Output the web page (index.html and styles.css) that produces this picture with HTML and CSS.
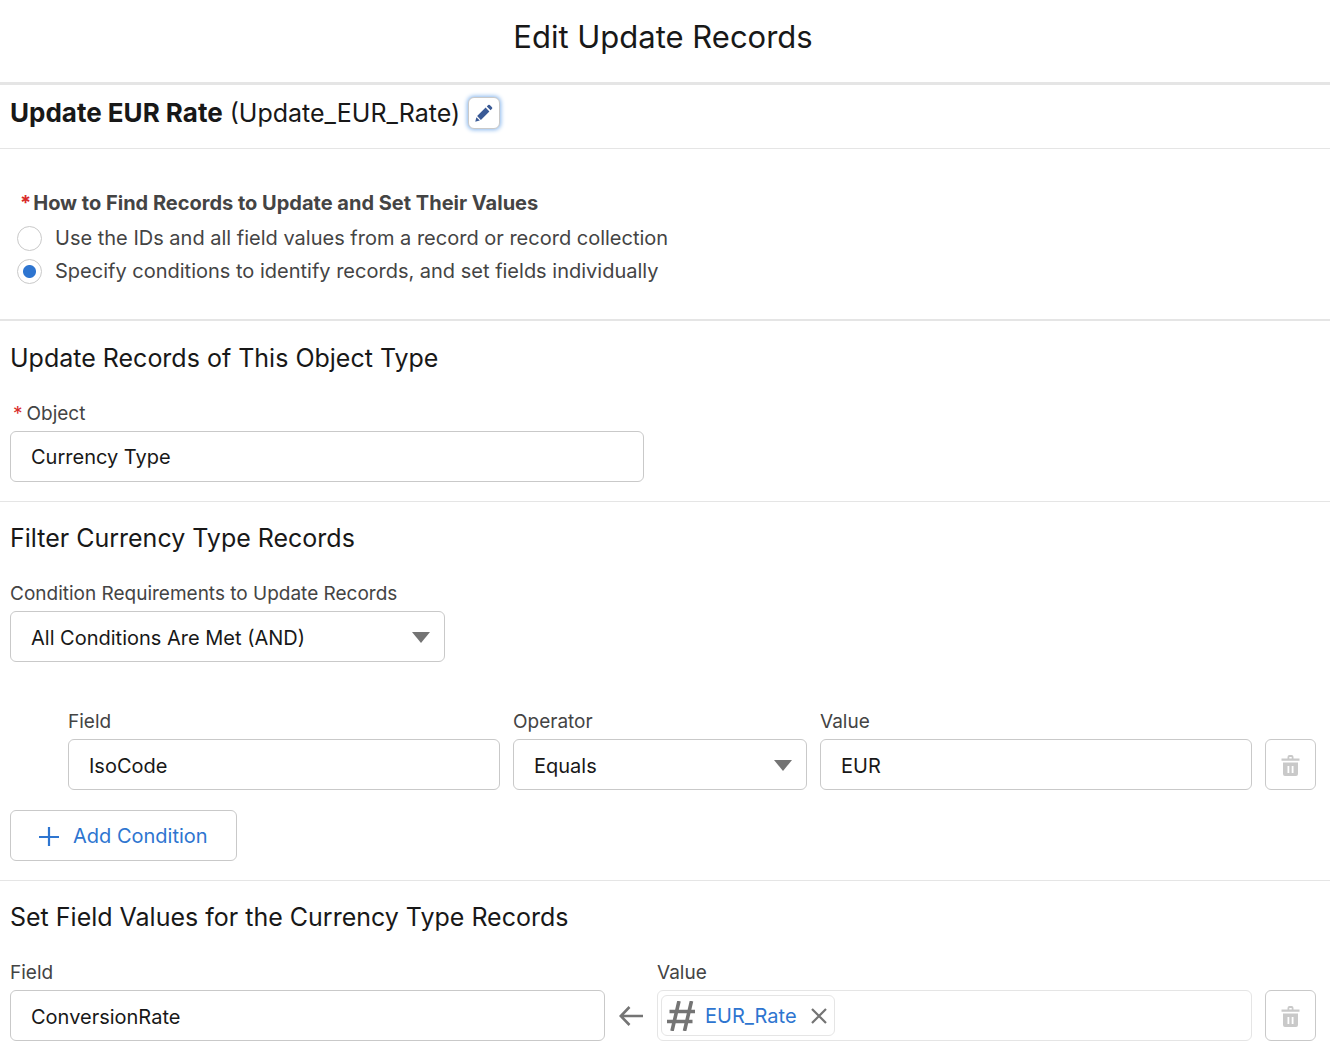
FILE: index.html
```
<!DOCTYPE html>
<html lang="en">
<head>
    <meta charset="UTF-8">
    <meta name="viewport" content="width=device-width, initial-scale=1.0">
    <title>Edit Update Records</title>
    <link rel="stylesheet" href="styles.css">
</head>
<body>
    <header class="modal-header">
        <h1>Edit Update Records</h1>
    </header>
    <form class="editor">
        <div class="element-name">
            <p><strong>Update EUR Rate</strong> (Update_EUR_Rate)</p>
            <button type="button" class="edit-button" aria-label="Edit name">
                <svg width="18" height="18" viewBox="0 0 18 18" fill="currentColor">
                    <path d="M2.1 12.1 10.6 3.6 14.400 7.400 5.900 15.900z"/>
                    <path d="M11.8 2.400 13.200 1Q14 .3 14.800 1L17 3.200Q17.700 4 17 4.800L15.600 6.200z"/>
                    <path d="M1.400 13.200 4.800 16.600 1 17.600Q.2 17.800.4 17z"/>
                </svg>
            </button>
        </div>

        <fieldset class="section find-records">
            <legend><span class="required">*</span>How to Find Records to Update and Set Their Values</legend>
            <label class="radio">
                <input type="radio" name="find">
                Use the IDs and all field values from a record or record collection
            </label>
            <label class="radio">
                <input type="radio" name="find" checked>
                Specify conditions to identify records, and set fields individually
            </label>
        </fieldset>

        <section class="section object-type">
            <h2>Update Records of This Object Type</h2>
            <div class="field half">
                <label for="object"><span class="required">*</span>Object</label>
                <input type="text" id="object" value="Currency Type" required>
            </div>
        </section>

        <section class="section">
            <h2>Filter Currency Type Records</h2>
            <div class="field third">
                <label for="requirements">Condition Requirements to Update Records</label>
                <div class="select">
                    <select id="requirements">
                        <option>All Conditions Are Met (AND)</option>
                    </select>
                </div>
            </div>
            <div class="condition-row">
                <div class="field">
                    <label for="filterField">Field</label>
                    <input type="text" id="filterField" value="IsoCode">
                </div>
                <div class="field">
                    <label for="operator">Operator</label>
                    <div class="select">
                        <select id="operator">
                            <option>Equals</option>
                        </select>
                    </div>
                </div>
                <div class="field">
                    <label for="filterValue">Value</label>
                    <input type="text" id="filterValue" value="EUR">
                </div>
                <button type="button" class="delete-button" aria-label="Delete condition" disabled>
                    <svg width="19" height="21" viewBox="0 0 18 21" fill="currentColor">
                        <path fill-rule="evenodd" d="M0 3.5h6V2Q6 0 8 0h2q2 0 2 2v1.500h6v2.300H0zM7.800 3.500h2.400V2H7.800z"/>
                        <path fill-rule="evenodd" d="M1.500 7.500h15V19q0 2-2 2h-11q-2 0-2-2zM6 11v7h1.800v-7zM10.200 11v7H12v-7z"/>
                    </svg>
                </button>
            </div>
            <button type="button" class="add-button">
                <svg width="20" height="20" viewBox="0 0 20 20" stroke="currentColor" stroke-width="2.2">
                    <path d="M10 1v19M0 11h20"/>
                </svg>
                Add Condition
            </button>
        </section>

        <section class="section">
            <h2>Set Field Values for the Currency Type Records</h2>
            <div class="assignment-row">
                <div class="field">
                    <label for="setField">Field</label>
                    <input type="text" id="setField" value="ConversionRate">
                </div>
                <div class="arrow">
                    <svg width="24" height="20" viewBox="0 0 24 20" fill="none" stroke="currentColor" stroke-width="2.6">
                        <path d="M24 10H2M10.500 1 1.800 10 10.500 19"/>
                    </svg>
                </div>
                <div class="field">
                    <label for="removeRate">Value</label>
                    <div class="pill-box">
                        <span class="pill">
                            <svg width="28" height="30" viewBox="0 0 28 30" fill="none" stroke="currentColor" stroke-width="3.6">
                                <path d="M12 0 5 30M24.500 0 17.500 30M2.500 10.500H28M0 20.500H25.500"/>
                            </svg>
                            <a href="#">EUR_Rate</a>
                            <button type="button" id="removeRate" aria-label="Remove EUR_Rate">
                                <svg width="16" height="16" viewBox="0 0 16 16" stroke="currentColor" stroke-width="2.200">
                                    <path d="M1 1 15 15M15 1 1 15"/>
                                </svg>
                            </button>
                        </span>
                    </div>
                </div>
                <button type="button" class="delete-button" aria-label="Delete field value" disabled>
                    <svg width="19" height="21" viewBox="0 0 18 21" fill="currentColor">
                        <path fill-rule="evenodd" d="M0 3.5h6V2Q6 0 8 0h2q2 0 2 2v1.500h6v2.300H0zM7.800 3.500h2.400V2H7.800z"/>
                        <path fill-rule="evenodd" d="M1.500 7.500h15V19q0 2-2 2h-11q-2 0-2-2zM6 11v7h1.800v-7zM10.200 11v7H12v-7z"/>
                    </svg>
                </button>
            </div>
        </section>
    </form>
</body>
</html>
```
FILE: styles.css
```
* {
    box-sizing: border-box;
}
body {
    margin: 0;
    font-family: Inter, "Liberation Sans", sans-serif;
    font-size: 20px;
    color: #181818;
    background: #fff;
}
h1, h2, p {
    margin: 0;
    font-weight: normal;
}
svg {
    display: block;
    flex: none;
}
button, input, select {
    font: inherit;
    color: inherit;
}

/* Header */
.modal-header {
    padding: 17px 14px 25px 10px;
    text-align: center;
    border-bottom: 3px solid #e5e5e5;
}
h1 {
    font-size: 31px;
    line-height: 40px;
}
.element-name {
    display: flex;
    align-items: center;
    gap: 8px;
    padding: 11px 10px 18px;
    font-size: 25px;
    line-height: 34px;
    border-bottom: 1px solid #e5e5e5;
}
.element-name strong {
    font-size: 26px;
}
.edit-button {
    display: flex;
    align-items: center;
    justify-content: center;
    width: 32px;
    height: 32px;
    padding: 0;
    color: #3a5a96;
    background: #fff;
    border: 1px solid #c9c9c9;
    border-radius: 6px;
    box-shadow: 0 0 4px 1px #8ab8ee;
}

/* Sections */
.section {
    padding: 19px 14px 19px 10px;
    border-bottom: 1px solid #e5e5e5;
}
.section:last-child {
    border-bottom: none;
}
.object-type {
    padding-top: 20px;
}
h2 {
    margin-bottom: 26px;
    font-size: 25px;
    line-height: 34px;
}
.required {
    margin-right: 4px;
    color: #d92b2b;
}
.find-records {
    margin: 0;
    padding: 41px 17px 31px;
    color: #444;
    border: 0;
    border-bottom: 2px solid #e5e5e5;
}
.find-records legend {
    float: left;
    width: 100%;
    margin-bottom: 6px;
    padding: 0 3px;
    font-size: 20px;
    font-weight: bold;
    line-height: 26px;
}
.find-records .required {
    margin-right: 2px;
}
.radio {
    clear: both;
    display: flex;
    align-items: center;
    gap: 13px;
    line-height: 33px;
}
.radio input {
    appearance: none;
    width: 25px;
    height: 25px;
    margin: 0;
    border: 1px solid #c9c9c9;
    border-radius: 50%;
}
.radio input:checked {
    background: radial-gradient(circle, #2e75d0 6px, #fff 7px);
}

/* Fields */
.field label {
    display: block;
    margin-bottom: 5px;
    padding-top: 1px;
    font-size: 19px;
    line-height: 24px;
    color: #444;
}
.half {
    width: calc(50% - 19px);
}
.half label {
    padding-left: 3px;
}
.third {
    width: calc(100% / 3);
}
.field input,
.field select,
.pill-box {
    display: block;
    width: 100%;
    height: 51px;
    padding: 0 20px;
    background: #fff;
    border: 1px solid #c9c9c9;
    border-radius: 6px;
}
.field select {
    appearance: none;
}
.select {
    position: relative;
}
.select::after {
    content: "";
    position: absolute;
    top: 21px;
    right: 15px;
    border: 9px solid transparent;
    border-top: 11px solid #747474;
    border-bottom: none;
    pointer-events: none;
}
.condition-row {
    display: grid;
    grid-template-columns: 432fr 294fr 432fr 51px;
    gap: 13px;
    align-items: end;
    margin: 47px 0 20px;
    padding-left: 58px;
}
.condition-row input,
.condition-row select,
.third select,
.assignment-row input {
    padding-top: 2px;
}
.assignment-row {
    display: grid;
    grid-template-columns: 1fr 52px 1fr 64px;
    align-items: end;
}
.assignment-row .delete-button {
    margin-left: 13px;
}
.arrow {
    display: flex;
    align-items: center;
    justify-content: center;
    height: 51px;
    color: #747474;
}
.delete-button,
.add-button {
    display: flex;
    align-items: center;
    justify-content: center;
    height: 51px;
    padding: 0;
    background: #fff;
    border: 1px solid #c9c9c9;
    border-radius: 6px;
}
.delete-button {
    width: 51px;
    padding-top: 2px;
    color: #c9c9c9;
}
.add-button {
    gap: 14px;
    padding: 0 28px;
    color: #2e75d0;
}

/* Resource pill */
.pill-box {
    display: flex;
    align-items: center;
    padding: 0 3px;
    border-color: #e5e5e5;
}
.pill {
    display: flex;
    align-items: center;
    height: 41px;
    padding: 0 7px 0 5px;
    color: #747474;
    border: 1px solid #e5e5e5;
    border-radius: 6px;
}
.pill a {
    margin: 0 14px 0 10px;
    color: #2e75d0;
    text-decoration: none;
}
.pill button {
    padding: 0;
    color: #747474;
    background: none;
    border: none;
}
```
